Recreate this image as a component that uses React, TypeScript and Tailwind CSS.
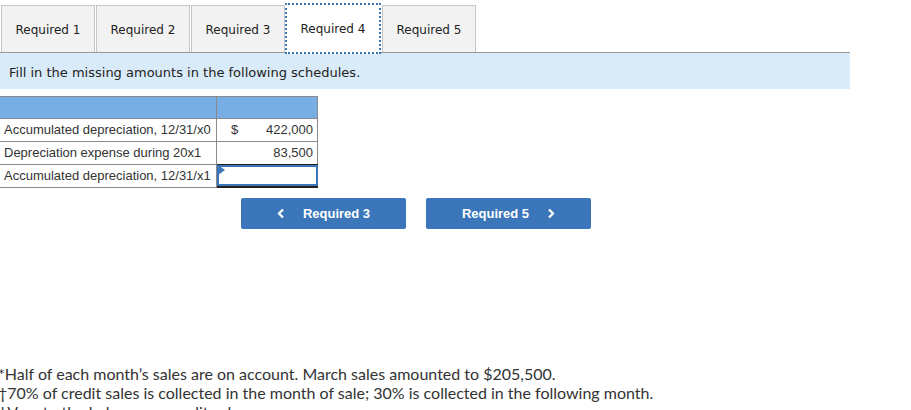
import React from "react";

const tabs = ["Required 1", "Required 2", "Required 3", "Required 4", "Required 5"];

function Chevron({ dir }: { dir: "left" | "right" }) {
  return (
    <svg width="8" height="11" viewBox="0 0 8 11" className="shrink-0">
      {dir === "left" ? (
        <path d="M6 1.5 L2 5.5 L6 9.5" stroke="white" strokeWidth="2.2" fill="none" />
      ) : (
        <path d="M2 1.5 L6 5.5 L2 9.5" stroke="white" strokeWidth="2.2" fill="none" />
      )}
    </svg>
  );
}

export default function App() {
  return (
    <div className="w-[911px] h-[410px] overflow-hidden bg-white text-[#333]">
      {/* Tabs */}
      <div className="flex items-end h-[53px] w-[850px] border-b border-[#9a9a9a] pl-[1px]">
        {tabs.map((t, i) => {
          const active = i === 3;
          if (active) {
            return (
              <div
                key={t}
                className="w-[96px] h-[51px] -mb-[2px] mr-[1px] pt-[1px] bg-white border-2 border-dotted border-[#3a76b8] flex items-center justify-center text-[12px] text-[#222] relative z-10"
                style={{ fontFamily: "'DejaVu Sans', Verdana, sans-serif" }}
              >
                {t}
              </div>
            );
          }
          return (
            <div
              key={t}
              className={`w-[94px] h-[47px] pt-[2px] bg-[#f2f2f2] border border-b-0 border-[#c6c6c6] flex items-center justify-center text-[12px] text-[#222] ${i < 2 ? "mr-[1px]" : ""}`}
              style={{ fontFamily: "'DejaVu Sans', Verdana, sans-serif" }}
            >
              {t}
            </div>
          );
        })}
      </div>

      {/* Instruction band */}
      <div
        className="w-[850px] h-[36px] bg-[#d9ebf9] flex items-center pl-[9px] pt-[3px] text-[13px] text-[#222]"
        style={{ fontFamily: "'DejaVu Sans', Verdana, sans-serif" }}
      >
        Fill in the missing amounts in the following schedules.
      </div>

      {/* Table */}
      <div
        className="mt-[7px] w-[318px] text-[13px] text-[#333]"
        style={{ fontFamily: "'Liberation Sans', Arial, sans-serif" }}
      >
        <div className="flex h-[23px] bg-[#78aee4] border-t border-b border-[#8a8a8a]">
          <div className="w-[217px] border-r border-[#8a8a8a]" />
          <div className="flex-1 border-r border-[#8a8a8a]" />
        </div>
        <div className="flex h-[23px] border-b border-[#8a8a8a]">
          <div className="w-[217px] border-r border-[#8a8a8a] pl-[4px] flex items-center">
            Accumulated depreciation, 12/31/x0
          </div>
          <div className="flex-1 border-r border-[#8a8a8a] flex items-center justify-between pl-[14px] pr-[4px]">
            <span>$</span>
            <span>422,000</span>
          </div>
        </div>
        <div className="flex h-[23px] border-b border-[#8a8a8a]">
          <div className="w-[217px] border-r border-[#8a8a8a] pl-[4px] flex items-center">
            Depreciation expense during 20x1
          </div>
          <div className="flex-1 border-r border-[#8a8a8a] flex items-center justify-end pr-[4px]">
            83,500
          </div>
        </div>
        <div className="flex h-[23px] border-b border-[#8a8a8a]">
          <div className="w-[217px] border-r border-[#8a8a8a] pl-[4px] flex items-center">
            Accumulated depreciation, 12/31/x1
          </div>
          <div className="flex-1 relative border-t border-t-[#222] -mt-[1px] border-b-2 border-b-[#222] -mb-[1px]">
            <div className="absolute inset-0 border-2 border-[#3a76b8] bg-white" />
            <div className="absolute left-[1px] top-[1px] w-0 h-0 border-t-[5px] border-t-transparent border-b-[5px] border-b-transparent border-l-[7px] border-l-[#3a76b8] -translate-y-[1px]" />
          </div>
        </div>
      </div>

      {/* Buttons */}
      <div
        className="mt-[10px] w-[832px] flex justify-center gap-[20px]"
        style={{ fontFamily: "'Liberation Sans', Arial, sans-serif" }}
      >
        <div className="w-[165px] h-[31px] rounded-[2px] bg-[#3a76b9] flex items-center justify-center gap-[18px] text-white font-bold text-[13px]">
          <Chevron dir="left" />
          <span>Required 3</span>
        </div>
        <div className="w-[165px] h-[31px] rounded-[2px] bg-[#3a76b9] flex items-center justify-center gap-[18px] text-white font-bold text-[13px]">
          <span>Required 5</span>
          <Chevron dir="right" />
        </div>
      </div>

      {/* Footnotes */}
      <div
        className="mt-[135px] text-[16px] leading-[19px] text-[#333] -ml-[2px]"
        style={{ fontFamily: "Lato, 'Open Sans', sans-serif" }}
      >
        <p>*Half of each month’s sales are on account. March sales amounted to $205,500.</p>
        <p>†70% of credit sales is collected in the month of sale; 30% is collected in the following month.</p>
        <p>‡Vary to the balance on credit sales.</p>
      </div>
    </div>
  );
}
